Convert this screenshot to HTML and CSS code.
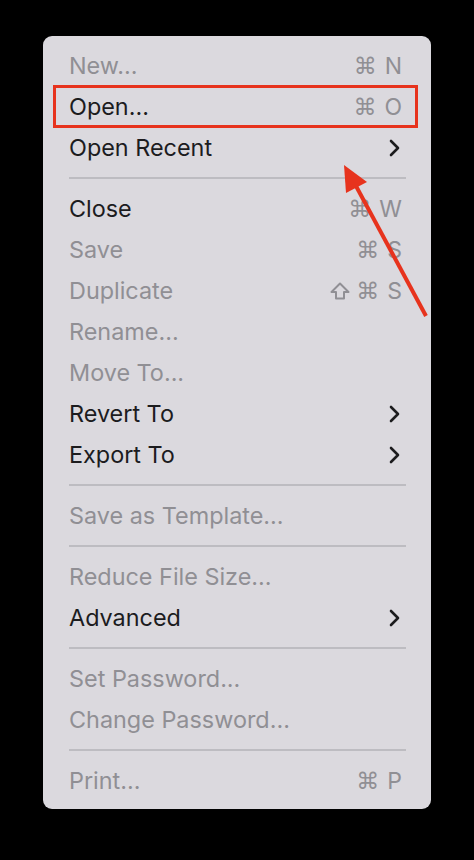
FILE: index.html
```html
<!DOCTYPE html>
<html lang="en">
<head>
  <meta charset="UTF-8">
  <meta name="viewport" content="width=device-width, initial-scale=1.0">
  <title>File Menu</title>
  <link rel="stylesheet" href="styles.css">
</head>
<body>

<div class="menu">
  <div class="item off"><span class="label">New...</span><span class="keys"><span class="cmd">⌘</span>N</span></div>
  <div class="item boxed"><span class="label">Open...</span><span class="keys"><span class="cmd">⌘</span>O</span></div>
  <div class="item"><span class="label">Open Recent</span><svg class="chev" viewBox="0 0 12 18"><polyline points="2,2 9,9 2,16"/></svg></div>
  <div class="sep"></div>
  <div class="item"><span class="label">Close</span><span class="keys"><span class="cmd">⌘</span>W</span></div>
  <div class="item off"><span class="label">Save</span><span class="keys"><span class="cmd">⌘</span>S</span></div>
  <div class="item off"><span class="label">Duplicate</span><span class="keys"><svg class="shift" viewBox="0 0 20 18"><path d="M10 1.5 L18.5 10 H14 V16.5 H6 V10 H1.5 Z"/></svg><span class="cmd">⌘</span>S</span></div>
  <div class="item off"><span class="label">Rename...</span></div>
  <div class="item off"><span class="label">Move To...</span></div>
  <div class="item"><span class="label">Revert To</span><svg class="chev" viewBox="0 0 12 18"><polyline points="2,2 9,9 2,16"/></svg></div>
  <div class="item"><span class="label">Export To</span><svg class="chev" viewBox="0 0 12 18"><polyline points="2,2 9,9 2,16"/></svg></div>
  <div class="sep"></div>
  <div class="item off"><span class="label">Save as Template...</span></div>
  <div class="sep"></div>
  <div class="item off"><span class="label">Reduce File Size...</span></div>
  <div class="item"><span class="label">Advanced</span><svg class="chev" viewBox="0 0 12 18"><polyline points="2,2 9,9 2,16"/></svg></div>
  <div class="sep"></div>
  <div class="item off"><span class="label">Set Password...</span></div>
  <div class="item off"><span class="label">Change Password...</span></div>
  <div class="sep"></div>
  <div class="item off"><span class="label">Print...</span><span class="keys"><span class="cmd">⌘</span>P</span></div>
</div>

<!-- annotation arrow pointing at the menu -->
<svg class="arrow" width="474" height="860" viewBox="0 0 474 860">
  <line x1="426" y1="316" x2="356" y2="186" />
  <polygon points="344,165 367,182 346,193" />
</svg>

</body>
</html>
```

FILE: styles.css
```css
/* Page */
body {
  margin: 0;
  padding: 36px 43px;
  background-color: #000;
  font-family: Inter, "Noto Sans", "DejaVu Sans", sans-serif;
  position: relative;
  min-height: 860px;
  box-sizing: border-box;
}

/* Menu panel */
.menu {
  width: 388px;
  box-sizing: border-box;
  background-color: #dbd9de;
  border-radius: 9px;
  padding: 9px 26px 8px 26px;
}
.item {
  height: 41px;
  display: flex;
  align-items: center;
  justify-content: space-between;
  font-size: 23.4px;
  color: #1c1c1e;
  position: relative;
}
.item.off {
  color: #908f94;
}
.keys {
  color: #908f94;
  display: flex;
  align-items: center;
  gap: 8px;
  font-size: 23px;
  margin-right: 3px;
}
.cmd {
  font-family: "DejaVu Sans", sans-serif;
  font-size: 23px;
}
.shift {
  width: 20px;
  height: 18px;
  margin-right: -2px;
  fill: none;
  stroke: #908f94;
  stroke-width: 2;
  stroke-linejoin: round;
}
.chev {
  width: 12px;
  height: 18px;
  margin-right: 4px;
  fill: none;
  stroke: #1c1c1e;
  stroke-width: 2.6;
  stroke-linecap: round;
  stroke-linejoin: round;
}
.sep {
  height: 20px;
  display: flex;
  align-items: center;
}
.sep::before {
  content: "";
  flex: 1;
  margin-right: -1px;
  height: 2px;
  background-color: #bdbcc1;
}

/* Red highlight around "Open..." */
.boxed::after {
  content: "";
  position: absolute;
  left: -16px;
  right: -13px;
  top: -1px;
  bottom: -1px;
  border: 3px solid #e7331d;
}

/* Annotation arrow */
.arrow {
  position: absolute;
  left: 0;
  top: 0;
}
.arrow line {
  stroke: #e7331d;
  stroke-width: 4;
}
.arrow polygon {
  fill: #e7331d;
}
```
